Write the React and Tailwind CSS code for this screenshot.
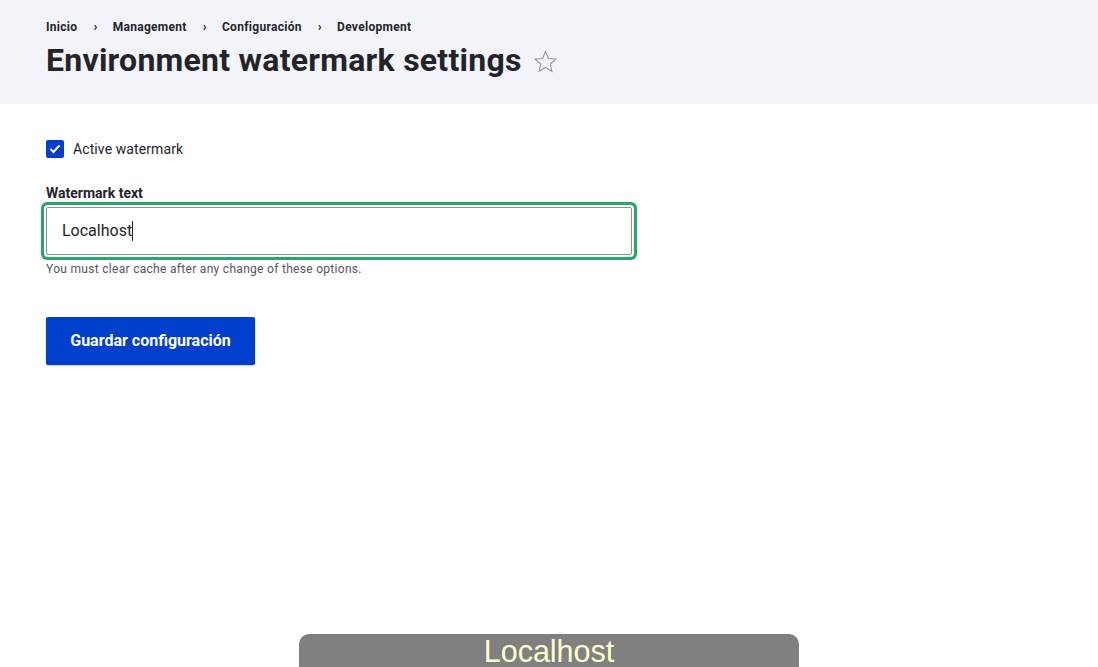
export default function App() {
  return (
    <div className="min-h-[667px] bg-white font-['Roboto',sans-serif] text-[#232429] relative overflow-hidden">
      {/* Page header */}
      <header className="bg-[#f3f4f9] h-[104px] px-[46px] pt-[20px]">
        <nav className="flex items-center text-[12px] font-bold leading-[14px] tracking-[0.3px] text-[#232429]">
          <span>Inicio</span>
          <span className="ml-[16px] mr-[15px] text-[13px]">›</span>
          <span>Management</span>
          <span className="ml-[16px] mr-[15px] text-[13px]">›</span>
          <span>Configuración</span>
          <span className="ml-[16px] mr-[15px] text-[13px]">›</span>
          <span>Development</span>
        </nav>
        <div className="flex items-center mt-[7px]">
          <h1 className="text-[32px] font-bold leading-[38px] tracking-[0.25px]">Environment watermark settings</h1>
          <svg className="ml-[11px] mt-[2px]" width="25" height="25" viewBox="0 0 24 24" fill="none" stroke="#8e929c" strokeWidth="1">
            <path d="M12 2.5l2.8 6.6 7.2.6-5.5 4.7 1.7 7-6.2-3.8-6.2 3.8 1.7-7-5.5-4.7 7.2-.6z" />
          </svg>
        </div>
      </header>

      {/* Form */}
      <main className="px-[46px] pt-[36px]">
        <label className="flex items-center gap-[9px] text-[14px] leading-[18px] tracking-[0.1px]">
          <span className="w-[18px] h-[18px] rounded-[2px] bg-[#003ecc] flex items-center justify-center">
            <svg width="12" height="10" viewBox="0 0 12 10" fill="none" stroke="white" strokeWidth="2">
              <path d="M1.5 5l3 3 6-6.5" />
            </svg>
          </span>
          <span>Active watermark</span>
        </label>

        <div className="mt-[26px]">
          <div className="text-[14px] font-bold leading-[18px] mb-[5px]">Watermark text</div>
          <div className="w-[586px] h-[48px] rounded-[2px] border border-[#8e929c] bg-white flex items-center px-[15px] shadow-[0_0_0_2px_#fff,0_0_0_5px_#26a769] text-[16px]">
            <span>Localhost</span>
            <span className="w-px h-[20px] bg-[#232429]"></span>
          </div>
          <div className="text-[12px] leading-[15px] tracking-[0.3px] text-[#545560] mt-[7px]">You must clear cache after any change of these options.</div>
        </div>

        <button className="mt-[40px] h-[48px] w-[209px] bg-[#003ecc] text-white text-[16px] font-bold rounded-[2px] shadow-[0_1px_2px_rgba(0,0,0,0.2)]">
          Guardar configuración
        </button>
      </main>

      {/* Environment watermark */}
      <div className="absolute bottom-0 left-[299px] w-[500px] h-[33px] bg-[#808080] rounded-t-[10px] flex justify-center items-start">
        <span className="font-['Liberation_Sans',sans-serif] text-[30.5px] leading-[35px] text-[#ffffcc]">Localhost</span>
      </div>
    </div>
  );
}
